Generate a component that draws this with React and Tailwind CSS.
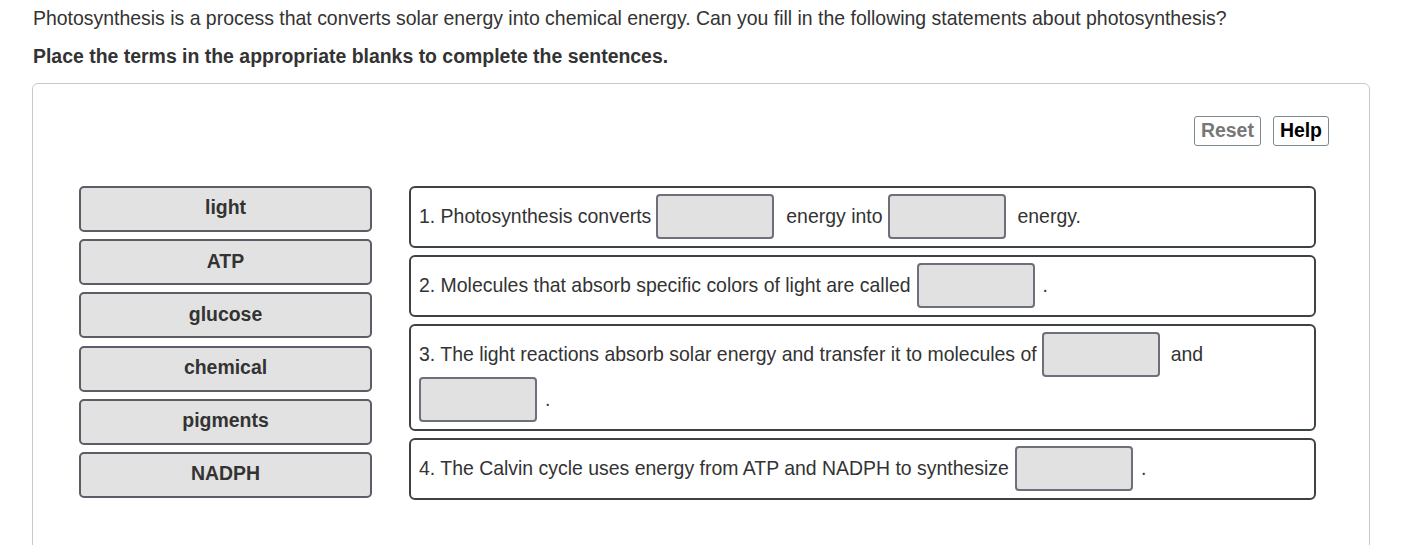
import React from 'react';

const TERMS = ['light', 'ATP', 'glucose', 'chemical', 'pigments', 'NADPH'];

const Blank = ({ className = 'ml-[6px]' }) => (
  <span className={`${className} inline-block h-[45px] w-[118px] rounded-[4px] border-2 border-[#6f6f7b] bg-[#e1e1e1]`} />
);

const Sentence = ({ children, tall }) => (
  <div
    className={`flex flex-wrap content-start items-center rounded-[6px] border-2 border-[#3d4246] bg-white pl-[8px] pr-[8px] pt-[6px] ${tall ? 'h-[107px]' : 'h-[62px]'}`}
  >
    {children}
  </div>
);

const App = () => {
  return (
    <div className="min-h-[545px] bg-white text-[19.45px] text-[#333] font-['Liberation_Sans',Arial,sans-serif]">
      <div className="pl-[33px] pt-[6px]">
        <p className="leading-[24px]">
          Photosynthesis is a process that converts solar energy into chemical energy. Can you fill in the following statements about photosynthesis?
        </p>
        <p className="mt-[14px] font-bold leading-[24px]">
          Place the terms in the appropriate blanks to complete the sentences.
        </p>
      </div>

      <div className="ml-[32px] mt-[15px] h-[520px] w-[1338px] rounded-[6px] border border-[#c9c9c9] pl-[46px] pr-[40px] pt-[32px]">
        <div className="flex justify-end gap-[12px]">
          <button className="h-[30px] rounded-[3px] border border-[#7b8a91] px-[6px] font-bold leading-none text-[#777]">
            Reset
          </button>
          <button className="h-[30px] rounded-[3px] border border-[#7b8a91] px-[6px] font-bold leading-none text-black">
            Help
          </button>
        </div>

        <div className="mt-[40px] flex gap-[37px]">
          <div className="flex w-[293px] flex-col gap-[7.2px]">
            {TERMS.map((term) => (
              <div
                key={term}
                className="flex h-[46px] items-center justify-center rounded-[5px] border-2 border-[#5d5d68] bg-[#e2e2e2] pb-[2px] font-bold text-[#333]"
              >
                {term}
              </div>
            ))}
          </div>

          <div className="flex w-[907px] flex-col gap-[7px]">
            <Sentence>
              <span>1. Photosynthesis converts</span>
              <Blank className="ml-[5px]" />
              <span className="ml-[12px]">energy into</span>
              <Blank className="ml-[6px]" />
              <span className="ml-[11px]">energy.</span>
            </Sentence>
            <Sentence>
              <span>2. Molecules that absorb specific colors of light are called</span>
              <Blank className="ml-[6px]" />
              <span className="ml-[8px]">.</span>
            </Sentence>
            <Sentence tall>
              <span>3. The light reactions absorb solar energy and transfer it to molecules of</span>
              <Blank className="ml-[5px]" />
              <span className="ml-[11px]">and</span>
              <span className="w-full" />
              <Blank className="ml-0" />
              <span className="ml-[8px]">.</span>
            </Sentence>
            <Sentence>
              <span>4. The Calvin cycle uses energy from ATP and NADPH to synthesize</span>
              <Blank className="ml-[6px]" />
              <span className="ml-[8px]">.</span>
            </Sentence>
          </div>
        </div>
      </div>
    </div>
  );
};

export default App;
